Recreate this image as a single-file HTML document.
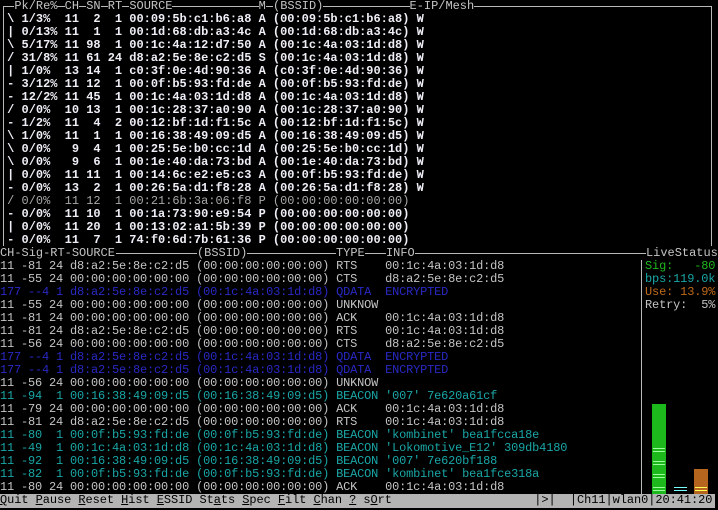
<!DOCTYPE html>
<html><head><meta charset="utf-8">
<style>
html,body{margin:0;padding:0;background:#000;}
body{width:718px;height:510px;position:relative;overflow:hidden;}
pre{margin:0;position:absolute;font-family:"Liberation Mono","DejaVu Sans Mono",monospace;font-size:11.97px;line-height:13px;color:#c4c4c4;z-index:2;}
.b{font-weight:bold;color:#eeeef6;}
.g{color:#a8a8a8;font-weight:normal;}
.h{background:#000;color:#c4c4c4;}
.bl{color:#2828c4;}
.cy{color:#1aa6a6;}
.gr{color:#1cb81c;}
.or{color:#c06a1a;}
.ln{position:absolute;background:#b8b8b8;z-index:1;}
.bar{position:absolute;z-index:1;}
.mk{position:absolute;height:1px;z-index:3;}
.sb{position:absolute;left:0;top:494px;width:715px;height:14px;background:#b4b4b4;z-index:1;}
.st{color:#000;}
u{text-decoration:underline;}
.lbl{position:absolute;top:247px;}
</style></head><body>
<div class="ln" style="left:3px;top:6px;width:709px;height:1px"></div>
<div class="ln" style="left:3px;top:6px;width:1px;height:241px"></div>
<div class="ln" style="left:711px;top:6px;width:1px;height:241px"></div>
<div class="ln" style="left:116px;top:253px;width:530px;height:1px"></div>
<div class="ln" style="left:641px;top:260px;width:1px;height:234px"></div>
<div class="sb"></div>
<div class="bar" style="left:652px;top:404px;width:14px;height:90px;background:#1cb81c"></div>
<div class="bar" style="left:694px;top:469px;width:14px;height:25px;background:#b5651d"></div>
<div class="mk" style="left:653px;top:448px;width:12px;background:#9cff9c"></div>
<div class="mk" style="left:653px;top:451px;width:12px;background:#9cff9c"></div>
<div class="mk" style="left:653px;top:461px;width:12px;background:#9cff9c"></div>
<div class="mk" style="left:653px;top:464px;width:12px;background:#9cff9c"></div>
<div class="mk" style="left:653px;top:474px;width:12px;background:#9cff9c"></div>
<div class="mk" style="left:653px;top:477px;width:12px;background:#9cff9c"></div>
<div class="mk" style="left:653px;top:487px;width:12px;background:#9cff9c"></div>
<div class="mk" style="left:653px;top:490px;width:12px;background:#9cff9c"></div>
<div class="mk" style="left:674px;top:487px;width:13px;background:#7ff"></div>
<div class="mk" style="left:674px;top:490px;width:13px;background:#7ff"></div>
<div class="mk" style="left:695px;top:487px;width:12px;background:#ff5"></div>
<div class="mk" style="left:695px;top:490px;width:12px;background:#ff5"></div>
<pre style="left:0;top:0">  <span class="h">Pk/Re%</span> <span class="h">CH</span> <span class="h">SN</span> <span class="h">RT</span> <span class="h">SOURCE</span>            <span class="h">M</span> <span class="h">(BSSID)</span>            <span class="h">E-IP/Mesh</span>
<span class="b"> \ 1/3%  11  2  1 00:09:5b:c1:b6:a8 A (00:09:5b:c1:b6:a8) W</span>
<span class="b"> | 0/13% 11  1  1 00:1d:68:db:a3:4c A (00:1d:68:db:a3:4c) W</span>
<span class="b"> \ 5/17% 11 98  1 00:1c:4a:12:d7:50 A (00:1c:4a:03:1d:d8) W</span>
<span class="b"> / 31/8% 11 61 24 d8:a2:5e:8e:c2:d5 S (00:1c:4a:03:1d:d8) W</span>
<span class="b"> | 1/0%  13 14  1 c0:3f:0e:4d:90:36 A (c0:3f:0e:4d:90:36) W</span>
<span class="b"> - 3/12% 11 12  1 00:0f:b5:93:fd:de A (00:0f:b5:93:fd:de) W</span>
<span class="b"> - 12/2% 11 45  1 00:1c:4a:03:1d:d8 A (00:1c:4a:03:1d:d8) W</span>
<span class="b"> / 0/0%  10 13  1 00:1c:28:37:a0:90 A (00:1c:28:37:a0:90) W</span>
<span class="b"> - 1/2%  11  4  2 00:12:bf:1d:f1:5c A (00:12:bf:1d:f1:5c) W</span>
<span class="b"> \ 1/0%  11  1  1 00:16:38:49:09:d5 A (00:16:38:49:09:d5) W</span>
<span class="b"> \ 0/0%   9  4  1 00:25:5e:b0:cc:1d A (00:25:5e:b0:cc:1d) W</span>
<span class="b"> \ 0/0%   9  6  1 00:1e:40:da:73:bd A (00:1e:40:da:73:bd) W</span>
<span class="b"> | 0/0%  11 11  1 00:14:6c:e2:e5:c3 A (00:0f:b5:93:fd:de) W</span>
<span class="b"> - 0/0%  13  2  1 00:26:5a:d1:f8:28 A (00:26:5a:d1:f8:28) W</span>
<span class="g"> / 0/0%  11 12  1 00:21:6b:3a:06:f8 P (00:00:00:00:00:00)</span>
<span class="b"> - 0/0%  11 10  1 00:1a:73:90:e9:54 P (00:00:00:00:00:00)</span>
<span class="b"> | 0/0%  11 20  1 00:13:02:a1:5b:39 P (00:00:00:00:00:00)</span>
<span class="b"> - 0/0%  11  7  1 74:f0:6d:7b:61:36 P (00:00:00:00:00:00)</span></pre>
<pre class="lbl" style="left:0"><span class="h">CH-Sig-RT-SOURCE</span></pre>
<pre class="lbl" style="left:197px"><span class="h">(BSSID)</span></pre>
<pre class="lbl" style="left:336px"><span class="h">TYPE</span></pre>
<pre class="lbl" style="left:386px"><span class="h">INFO</span></pre>
<pre class="lbl" style="left:646px"><span class="h">LiveStatus</span></pre>
<pre style="left:645px;top:260px;letter-spacing:-0.15px"><span class="gr">Sig:   -80</span>
<span class="cy">bps:119.0k</span>
<span class="or">Use: 13.9%</span>
Retry:  5%</pre>
<pre style="left:0;top:260px;letter-spacing:-0.18px">11 -81 24 d8:a2:5e:8e:c2:d5 (00:00:00:00:00:00) RTS    00:1c:4a:03:1d:d8
11 -55 24 00:00:00:00:00:00 (00:00:00:00:00:00) CTS    d8:a2:5e:8e:c2:d5
<span class="bl">177 --4 1 d8:a2:5e:8e:c2:d5 (00:1c:4a:03:1d:d8) QDATA  ENCRYPTED</span>
11 -55 24 00:00:00:00:00:00 (00:00:00:00:00:00) UNKNOW
11 -81 24 00:00:00:00:00:00 (00:00:00:00:00:00) ACK    00:1c:4a:03:1d:d8
11 -81 24 d8:a2:5e:8e:c2:d5 (00:00:00:00:00:00) RTS    00:1c:4a:03:1d:d8
11 -56 24 00:00:00:00:00:00 (00:00:00:00:00:00) CTS    d8:a2:5e:8e:c2:d5
<span class="bl">177 --4 1 d8:a2:5e:8e:c2:d5 (00:1c:4a:03:1d:d8) QDATA  ENCRYPTED</span>
<span class="bl">177 --4 1 d8:a2:5e:8e:c2:d5 (00:1c:4a:03:1d:d8) QDATA  ENCRYPTED</span>
11 -56 24 00:00:00:00:00:00 (00:00:00:00:00:00) UNKNOW
<span class="cy">11 -94  1 00:16:38:49:09:d5 (00:16:38:49:09:d5) BEACON '007' 7e620a61cf</span>
11 -79 24 00:00:00:00:00:00 (00:00:00:00:00:00) ACK    00:1c:4a:03:1d:d8
11 -81 24 d8:a2:5e:8e:c2:d5 (00:00:00:00:00:00) RTS    00:1c:4a:03:1d:d8
<span class="cy">11 -80  1 00:0f:b5:93:fd:de (00:0f:b5:93:fd:de) BEACON 'kombinet' bea1fcca18e</span>
<span class="cy">11 -49  1 00:1c:4a:03:1d:d8 (00:1c:4a:03:1d:d8) BEACON 'Lokomotive_E12' 309db4180</span>
<span class="cy">11 -92  1 00:16:38:49:09:d5 (00:16:38:49:09:d5) BEACON '007' 7e620bf188</span>
<span class="cy">11 -82  1 00:0f:b5:93:fd:de (00:0f:b5:93:fd:de) BEACON 'kombinet' bea1fce318a</span>
11 -80 24 00:00:00:00:00:00 (00:00:00:00:00:00) ACK    00:1c:4a:03:1d:d8</pre>
<pre style="left:0;top:494px;letter-spacing:-0.06px"><span class="st"><u>Q</u>uit <u>P</u>ause <u>R</u>eset <u>H</u>ist <u>E</u>SSID St<u>a</u>ts <u>S</u>pec <u>F</u>ilt <u>C</u>han <u>?</u> s<u>O</u>rt                    |&gt;|  |Ch11|wlan0|20:41:20</span></pre>
</body></html>
